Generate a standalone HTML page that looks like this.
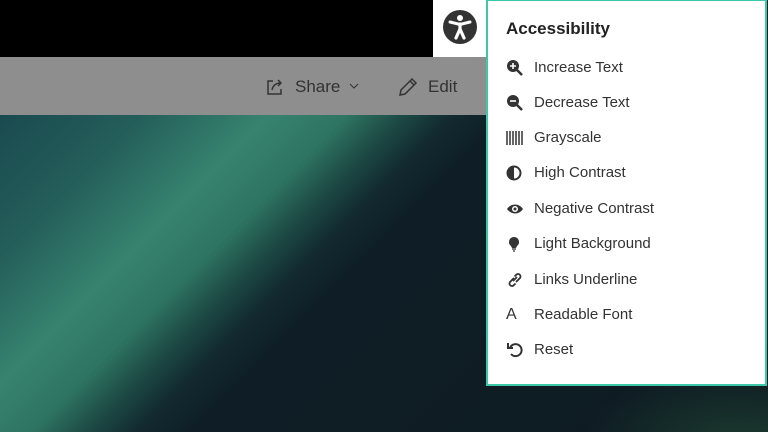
<!DOCTYPE html>
<html><head><style>
*{margin:0;padding:0;box-sizing:border-box}
body{width:768px;height:432px;overflow:hidden;position:relative;font-family:"Liberation Sans",sans-serif;background:#0e1b23}
#bg{position:absolute;left:0;top:115px;width:768px;height:317px;
background:
radial-gradient(ellipse 160px 80px at 740px 330px,rgba(40,90,60,.5),transparent),
linear-gradient(135deg,#1a4a50 0px,#245e5a 100px,#37836f 190px,#2e7562 245px,#1d4a45 285px,#122a30 320px,#0f1e26 360px,#0e1a22 100%);}
#top{position:absolute;left:0;top:0;width:433px;height:57px;background:#000}
#abtn{position:absolute;left:433px;top:0;width:54px;height:57px;background:#fff}
#bar{position:absolute;left:0;top:57px;width:487px;height:58px;background:#8e8e8e;color:#333;font-size:17px}
#panel{position:absolute;left:486px;top:0;width:281px;height:386px;background:#fff;border:2px solid #3cc8a8;border-top:1px solid #3cc8a8}
.t{position:absolute;left:18px;top:18px;font-weight:bold;font-size:17px;color:#222}
.i{position:absolute;left:46px;font-size:15px;color:#333}
.ic{position:absolute;left:18px;width:18px;height:18px}
</style></head><body>
<div id="bg"></div>
<div id="top"></div>
<div id="abtn"><svg width="54" height="57"><circle cx="27" cy="27" r="17" fill="#333"/><circle cx="27" cy="18" r="3" fill="#fff"/><path d="M17 22 L27 24.5 L37 22" stroke="#fff" stroke-width="3" fill="none" stroke-linecap="round"/><path d="M27 24 L27 30 M27 29 L23 38 M27 29 L31 38" stroke="#fff" stroke-width="3.2" fill="none" stroke-linecap="round"/></svg></div>
<div id="bar">
<svg style="position:absolute;left:265px;top:20px" width="20" height="20" viewBox="0 0 20 20" fill="none" stroke="#333" stroke-width="1.5"><path d="M8 4H3v13h13v-5"/><path d="M7 13c1-5 4-7 9-7M13 3l3 3-3 3"/></svg>
<span style="position:absolute;left:295px;top:20px">Share</span>
<svg style="position:absolute;left:349px;top:25px" width="10" height="8"><path d="M1 2l4 4 4-4" stroke="#333" fill="none"/></svg>
<svg style="position:absolute;left:397px;top:19px" width="22" height="22" viewBox="0 0 22 22" fill="none" stroke="#333" stroke-width="1.5"><path d="M3 19l1-5L15 3l4 4L8 18z M13 5l4 4"/></svg>
<span style="position:absolute;left:428px;top:20px">Edit</span>
</div>
<div id="panel">
<div class="t">Accessibility</div>
<svg class="ic" style="top:58px" viewBox="0 0 18 18"><circle cx="7" cy="7" r="6" fill="#333"/><path d="M11 11l5 5" stroke="#333" stroke-width="2.5"/><path d="M4 7h6M7 4v6" stroke="#fff" stroke-width="1.6"/></svg>
<div class="i" style="top:58px">Increase Text</div>
<svg class="ic" style="top:93px" viewBox="0 0 18 18"><circle cx="7" cy="7" r="6" fill="#333"/><path d="M11 11l5 5" stroke="#333" stroke-width="2.5"/><path d="M4 7h6" stroke="#fff" stroke-width="1.6"/></svg>
<div class="i" style="top:93px">Decrease Text</div>
<svg class="ic" style="top:128px" viewBox="0 0 18 18"><path d="M1 2v14M4 2v14M7 2v14M10 2v14M13 2v14M16 2v14" stroke="#333" stroke-width="1.5"/></svg>
<div class="i" style="top:128px">Grayscale</div>
<svg class="ic" style="top:163px" viewBox="0 0 18 18"><circle cx="8" cy="9" r="6.5" fill="none" stroke="#333" stroke-width="2"/><path d="M8 2.5a6.5 6.5 0 0 0 0 13z" fill="#333"/></svg>
<div class="i" style="top:163px">High Contrast</div>
<svg class="ic" style="top:199px" viewBox="0 0 18 18"><path d="M1 9c4-6 12-6 16 0c-4 6-12 6-16 0z" fill="#333"/><circle cx="9" cy="9" r="3" fill="#fff"/><circle cx="9" cy="9" r="1.5" fill="#333"/></svg>
<div class="i" style="top:199px">Negative Contrast</div>
<svg class="ic" style="top:234px" viewBox="0 0 18 18"><path d="M8 2a5 5 0 0 0-3 9l1 2h4l1-2a5 5 0 0 0-3-9z" fill="#333"/><path d="M6 14h4M7 16h2" stroke="#333" stroke-width="1.3"/></svg>
<div class="i" style="top:234px">Light Background</div>
<svg class="ic" style="top:270px" viewBox="0 0 18 18" fill="none" stroke="#333" stroke-width="1.8"><path d="M8 7l-4 4a2.5 2.5 0 0 0 3.5 3.5l2-2"/><path d="M10 11l4-4a2.5 2.5 0 0 0-3.5-3.5l-2 2"/><path d="M7 10l4-4" /></svg>
<div class="i" style="top:270px">Links Underline</div>
<div class="i" style="top:305px;left:18px;font-size:16px">A</div>
<div class="i" style="top:305px">Readable Font</div>
<svg class="ic" style="top:340px" viewBox="0 0 18 18" fill="none" stroke="#333" stroke-width="2"><path d="M4 7a6 6 0 1 1 1 6"/><path d="M2 2v5h5"/></svg>
<div class="i" style="top:340px">Reset</div>
</div>
</body></html>
